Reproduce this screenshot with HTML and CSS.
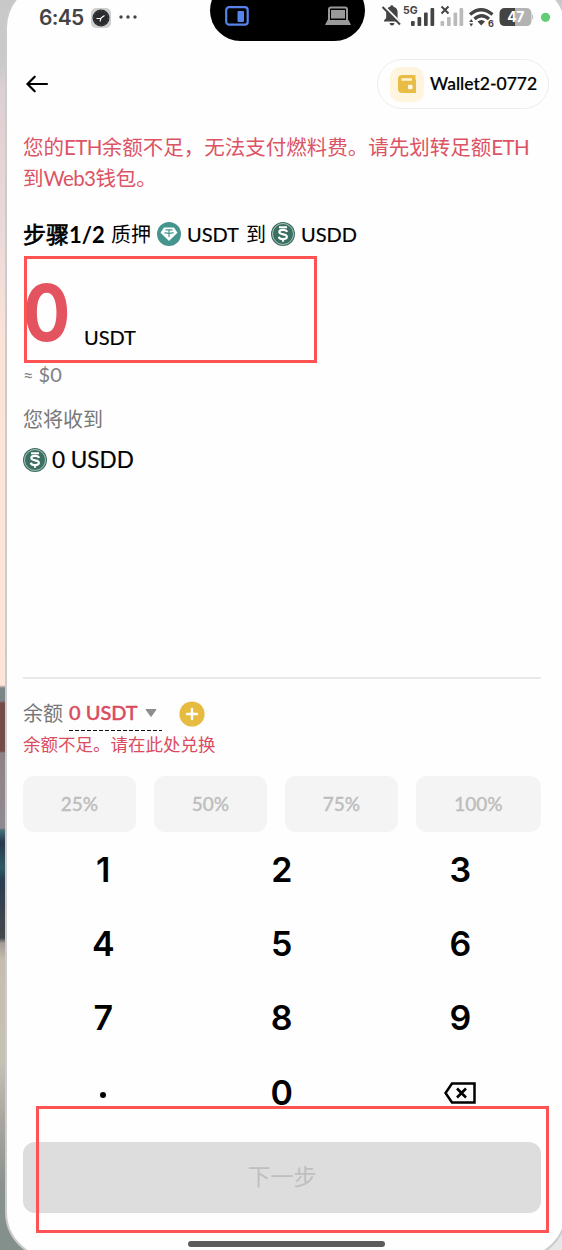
FILE: index.html
```html
<!DOCTYPE html>
<html lang="zh-CN">
<head>
<meta charset="utf-8">
<title>质押 USDT</title>
<link rel="stylesheet" href="styles.css">
</head>
<body>
<svg class="defs" aria-hidden="true">
  <symbol id="usdd" viewBox="0 0 24 24">
    <circle cx="12" cy="12" r="12" fill="#3b6f61"/>
    <circle cx="12" cy="12" r="10.500" fill="none" stroke="#c6d8d1" stroke-width=".8"/>
    <path d="M8 5.200h8M12 16.500v3.200M16 10C15.500 8.400 14 7.900 12 7.900c-2.300 0-3.700.8-3.700 2.200 0 3.200 7.600 1.400 7.600 4.600 0 1.500-1.600 2.400-3.900 2.400-2.200 0-3.800-.7-4.200-2.400" fill="none" stroke="#fff" stroke-width="2.100"/>
  </symbol>
</svg>
<main class="phone">
  <div class="status">
    <span class="clock">6:45</span>
    <svg class="app-clock" viewBox="0 0 20 20"><rect width="20" height="20" rx="5" fill="#cfcfcf"/><circle cx="10" cy="10" r="8.500" fill="#292b2e"/><circle cx="10" cy="10" r="7" fill="none" stroke="#85888b" stroke-width=".8" stroke-dasharray=".8 2.860"/><path d="M10 10 13.500 7.500M10 10.500H5.500M10 10l-1 3.500" stroke="#fff" stroke-width="1.100"/></svg>
    <svg class="more" viewBox="0 0 18 4"><g fill="#444"><circle cx="2" cy="2" r="1.700"/><circle cx="9" cy="2" r="1.700"/><circle cx="16" cy="2" r="1.700"/></g></svg>
    <div class="island">
      <svg width="24" height="20" viewBox="0 0 24 20"><rect x="1.200" y="1.200" width="21.500" height="17.500" rx="3" fill="none" stroke="#5584ee" stroke-width="2.200"/><rect x="12.500" y="5" width="6.500" height="11" rx="1" fill="#5584ee"/></svg>
      <svg width="26" height="20" viewBox="0 0 26 20"><path d="M4 14V3.500Q4 1.500 6 1.500H20Q22 1.500 22 3.500V14" fill="none" stroke="#999" stroke-width="2"/><rect x="6" y="4" width="14" height="8.500" fill="#999"/><path d="M2.500 14H23.500L26 19H0Z" fill="#999"/></svg>
    </div>
    <svg class="signals" viewBox="0 0 172 30">
      <g fill="#444">
        <path d="M4 21.500v-1l2.200-2.500v-6c0-3 1.800-4.800 4-5.300 0-2 3.200-2 3.200 0 2.600.6 4.200 2.500 4.200 5.300v6l2.200 2.500v1zM9.500 23h5q-.5 2.500-2.500 2.500T9.500 23z"/>
        <path d="M3.500 5.500 21 23" stroke="#fff" stroke-width="2"/>
        <path d="M2.500 7 20 24.500" stroke="#444" stroke-width="2"/>
        <rect x="31" y="21" width="3.700" height="5" rx="1"/><rect x="37.500" y="17" width="3.700" height="9" rx="1"/><rect x="44" y="12.500" width="3.700" height="13.500" rx="1"/><rect x="50.500" y="8" width="3.700" height="18" rx="1"/>
      </g>
      <g fill="#bababa"><rect x="60.500" y="21" width="3.700" height="5" rx="1"/><rect x="67" y="17" width="3.700" height="9" rx="1"/><rect x="73.500" y="12.500" width="3.700" height="13.500" rx="1"/><rect x="79.500" y="8" width="3.700" height="18" rx="1"/></g>
      <path d="m61.500 6.500 7 7m0-7-7 7" stroke="#444" stroke-width="2"/>
      <g fill="none" stroke="#444" stroke-width="3.200"><path d="M90 14.500q11-9.500 22.500 0"/><path d="M94.500 19q7-6.500 14.500 0"/></g>
      <path d="M97.500 21.500q4-3 7.500 0L101.200 25.500z" fill="#444"/>
      <path d="m89.200 22 2-3 2 3zm0 1.500 2 3 2-3z" fill="#444"/>
      <text x="108" y="26.500" class="tiny six">6</text>
      <text x="23" y="14" class="tiny">5G</text>
      <path d="M125 8h10v18h-10q-5.500 0-5.500-5.500v-7Q119.500 8 125 8" fill="#444"/>
      <path d="M135 8h11q5.500 0 5.500 5.500v7q0 5.500-5.500 5.500h-11z" fill="#b3b3b3"/>
      <path d="M152.200 14q2 3 0 6z" fill="#b3b3b3"/>
      <text x="135.500" y="22.300" class="battery" text-anchor="middle">47</text>
      <circle cx="165.500" cy="17.300" r="4.600" fill="#62cc74"/>
    </svg>
  </div>

  <header class="header">
    <svg class="back" viewBox="0 0 24 18"><path d="M22 9H3M9.700 1.700 2.500 9l7.200 7.300" fill="none" stroke="#000" stroke-width="2.200" stroke-linecap="round"/></svg>
    <div class="wallet">
      <span class="wallet-icon"><svg width="18" height="18" viewBox="0 0 18 18"><path d="M4 0H17.500V4.500H18V18H4q-4 0-4-4V4q0-4 4-4" fill="#e9bd45"/><path d="M3.500 4.500H14" stroke="#fff4d8" stroke-width="2.500"/><rect x="10" y="9.800" width="4.500" height="4.500" rx=".8" fill="#fff8e8"/></svg></span>
      <span class="wallet-name">Wallet2-0772</span>
    </div>
  </header>

  <p class="alert">您的<span class="eth">ETH</span>余额不足，无法支付燃料费。请先划转足额<span class="eth">ETH</span><br>到<span class="eth">Web3</span>钱包。</p>

  <div class="step">
    <span class="step-no"><span class="step-word">步骤</span><b class="frac">1/2</b></span>
    <span class="verb">质押</span>
    <svg class="coin" viewBox="0 0 24 24"><circle cx="12" cy="12" r="12" fill="#45958f"/><path d="M7 5.500H17L20.500 10.700 12 19 3.500 10.700z" fill="#fff"/><path d="M8.500 7.900h7M12 7.900V15M7.500 10.600q4.500 1.500 9 0" fill="none" stroke="#45958f" stroke-width="1.200"/></svg>
    <span class="from">USDT</span>
    <span class="to">到</span>
    <svg class="coin"><use href="#usdd"/></svg>
    <span class="target">USDD</span>
  </div>

  <section class="amount">
    <span class="value">0</span><span class="unit">USDT</span>
  </section>
  <p class="fiat"><span class="approx">≈</span> $0</p>
  <p class="receive-label">您将收到</p>
  <div class="receive"><svg class="coin"><use href="#usdd"/></svg><span class="receive-value">0 USDD</span></div>

  <section class="balance">
    <div class="balance-row">
      <span class="balance-label">余额</span>
      <span class="token"><span class="token-name">0 USDT</span><svg width="12" height="8" viewBox="0 0 12 8"><path d="M1 .5h10L6 7.500z" fill="#8d8d8d" stroke="#8d8d8d" stroke-linejoin="round"/></svg></span>
      <svg class="add" viewBox="0 0 26 26"><circle cx="13" cy="13" r="12.600" fill="#e7bb40"/><path d="M13 8v10M8 13h10" stroke="#fff" stroke-width="2.400" stroke-linecap="round"/></svg>
    </div>
    <p class="hint">余额不足。请在此处兑换</p>
  </section>

  <div class="percents"><button>25%</button><button>50%</button><button>75%</button><button>100%</button></div>

  <div class="keypad">
    <span>1</span><span>2</span><span>3</span>
    <span>4</span><span>5</span><span>6</span>
    <span>7</span><span>8</span><span>9</span>
    <span><i class="dot"></i></span><span>0</span>
    <span><svg class="delete" viewBox="0 0 32 22"><path d="M8 1.500H30.500V20.500H8L1.500 11z" fill="none" stroke="#000" stroke-width="2.500"/><path d="m13 6.500 9 9m0-9-9 9" stroke="#000" stroke-width="2.600"/></svg></span>
  </div>

  <button class="next">下一步</button>
  <div class="home"></div>
  <div class="mark mark-amount"></div>
  <div class="mark mark-next"></div>
</main>
</body>
</html>
```
FILE: styles.css
```css
* { box-sizing: border-box; }
body {
  margin: 0;
  width: 562px;
  height: 1250px;
  overflow: hidden;
  display: flex;
  position: relative;
  font-family: Lato, "Noto Sans CJK SC", sans-serif;
  color: #000;
  background:
    linear-gradient(#c8c8c8 0, #cacaca 65px, #ddd0d2 90px, #ead9da 230px, #fce3d8 340px, #ffe5d8 685px, #7d8684 688px, #7d8488 701px, #754b49 703px, #754b49 751px, #8d8287 753px, #918990 828px, #44717c 830px, #28394e 842px, #2f5965 868px, #293c50 880px, #46484b 938px, #a39c96 943px, #c4bdb0 960px, #c7c2b6 1060px, #a8a69f 1120px, #89918d 1190px, #83908c 1250px) 0 0 / 36px 100% no-repeat,
    linear-gradient(#c8c8c8 50%, #e7e7e7 50%);
}
.defs { position: absolute; width: 0; height: 0; }
p { margin: 0; }
button { border: 0; padding: 0; font: inherit; }
.phone {
  flex: none;
  width: 562px;
  height: 1278px;
  margin: -19px 0 0 5px;
  padding: 17px 24px 0 16px;
  border: 2px solid #cbcbcb;
  border-radius: 47px;
  background: #fefefe;
  display: flex;
  flex-direction: column;
}
.phone > * { flex: none; }

.status { height: 41px; display: flex; align-items: flex-start; margin-right: -24px; }
.clock { margin: 4px 0 0 16px; width: 52px; font: 600 21px/27px Inter, sans-serif; color: #444; letter-spacing: -.7px; }
.app-clock { width: 20px; height: 20px; margin-top: 8px; }
.more { width: 18px; height: 4px; margin: 15px 0 0 8px; }
.island { width: 155px; height: 61px; margin: -20px 0 0 73px; padding: 26px 14px 0 15px; border-radius: 31px; background: #000; display: flex; justify-content: space-between; }
.signals { width: 172px; height: 30px; margin-left: 15px; flex: none; }
.tiny { font: 700 10.500px Inter, sans-serif; fill: #444; }
.six { font-size: 9px; }
.battery { font: 700 14px Inter, sans-serif; fill: #fff; letter-spacing: -.5px; }

.header { height: 86px; padding-top: 18px; display: flex; justify-content: space-between; }
.back { width: 24px; height: 18px; margin: 16px 0 0 2px; }
.wallet { width: 172px; height: 50px; margin-right: -8px; padding-left: 12px; border: 1.500px solid #ededed; border-radius: 25px; display: flex; align-items: center; }
.wallet-icon { width: 34px; height: 35px; border-radius: 10px; background: #fff5df; display: flex; align-items: center; justify-content: center; }
.wallet-name { margin: 0 0 2px 6px; font-size: 17.500px; font-weight: 500; -webkit-text-stroke: .2px; white-space: nowrap; }

.alert { margin-top: 5px; font-size: 20.500px; line-height: 30.500px; color: #dc5364; white-space: nowrap; margin-right: -24px; }
.eth { letter-spacing: -.6px; }

.step { height: 30px; margin-top: 26px; display: flex; align-items: center; white-space: nowrap; font-size: 20px; line-height: 30px; }
.step-no { width: 88px; }
.step-word { font-size: 23px; -webkit-text-stroke: .7px; }
.frac { font-size: 22px; }
.verb { width: 46px; }
.coin { width: 24px; height: 24px; }
.from { width: 59px; margin-left: 6px; -webkit-text-stroke: .2px; }
.to { width: 25px; }
.target { margin-left: 6px; -webkit-text-stroke: .2px; }

.amount { height: 106px; margin-top: 7px; display: flex; align-items: flex-start; }
.value { width: 61px; padding-top: 3px; font: 700 79px/106px Inter, sans-serif; color: #e35360; transform: scaleX(.89); transform-origin: 0 50%; }
.unit { padding-top: 67px; font-size: 20px; line-height: 28px; -webkit-text-stroke: .2px; }
.fiat { height: 26px; font-size: 20px; line-height: 25px; color: #808080; }
.approx { font-size: 18px; }
.receive-label { margin-top: 16px; font-size: 20px; line-height: 30px; color: #777; }
.receive { height: 30px; margin-top: 11px; display: flex; align-items: center; gap: 5px; font-size: 22.500px; -webkit-text-stroke: .2px; }
.receive-value { padding-bottom: 2px; }

.balance { margin-top: 202px; height: 99px; border-top: 2px solid #e9e9e9; padding-top: 19px; }
.balance-row { display: flex; height: 33px; align-items: flex-start; line-height: 30px; font-size: 20px; }
.balance-label { width: 46px; color: #777; }
.token { width: 93px; height: 33px; padding-bottom: 4px; display: flex; align-items: center; gap: 6px; color: #db4b60; background: repeating-linear-gradient(90deg, #111 0 4px, transparent 4px 6px) 0 100% / 100% 1.300px no-repeat; }
.token-name { width: 70px; padding-bottom: 1px; white-space: nowrap; font-weight: 500; -webkit-text-stroke: .4px; }
.add { width: 26px; height: 26px; margin: 3px 0 0 17px; }
.hint { font-size: 17.500px; line-height: 27px; color: #db4b60; }

.percents { display: grid; grid-template-columns: 113px 113px 113px 125px; gap: 18px; height: 56px; }
.percents button { padding-bottom: 2px; border-radius: 11px; background: #f4f4f4; color: #bdbdbd; font-size: 19px; font-weight: 500; -webkit-text-stroke: .3px; }

.keypad { display: grid; grid-template-columns: repeat(3, 178.500px); grid-auto-rows: 74.300px; margin-left: -9px; font: 600 34px Inter, sans-serif; }
.keypad span { display: flex; align-items: center; justify-content: center; }
.dot { width: 6px; height: 6px; margin-top: 6px; border-radius: 50%; background: #000; }
.delete { width: 32px; height: 22px; margin-top: 2px; }

.next { height: 71px; margin-top: 13px; padding-bottom: 6px; border-radius: 12px; background: #ddd; color: #bfbfbf; font-size: 23px; }
.home { width: 197px; height: 6px; margin: 28px 0 0 165px; border-radius: 3px; background: #5b5b5b; }
.mark { position: absolute; border: 3px solid #ff5353; }
.mark-amount { left: 24px; top: 256px; width: 293px; height: 107px; }
.mark-next { left: 36px; top: 1106px; width: 513px; height: 127px; }
```
